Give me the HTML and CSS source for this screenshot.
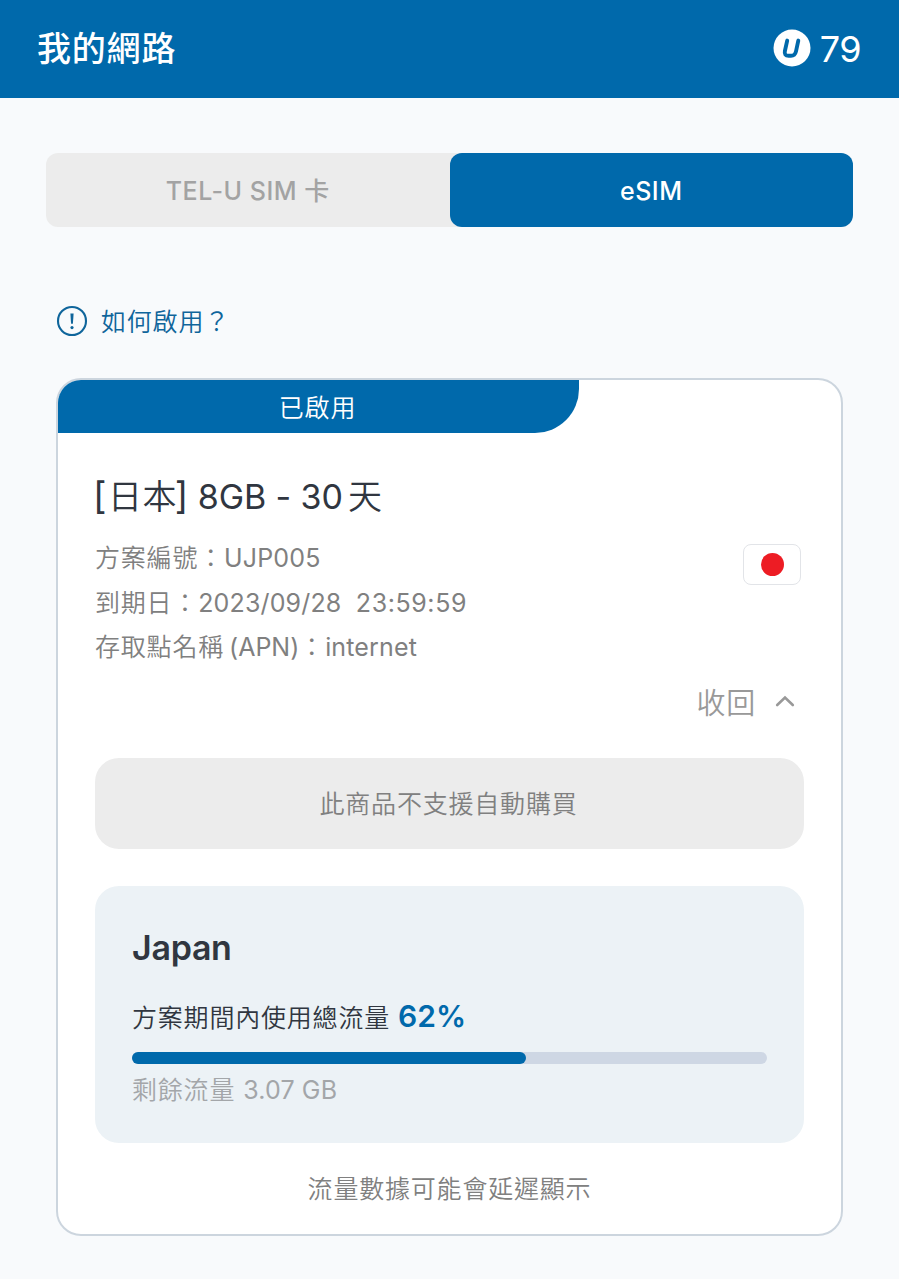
FILE: index.html
```
<!DOCTYPE html>
<html lang="zh-Hant">
  <head>
    <meta charset="utf-8" />
    <title>我的網路</title>
    <meta name="viewport" content="width=device-width, initial-scale=1" />
    <link rel="stylesheet" href="styles.css">
  </head>
  <body>
    <header class="header">
      <h1>我的網路</h1>
      <div class="points">
        <svg class="points-icon" viewBox="0 0 38 38" aria-hidden="true">
          <circle cx="19" cy="19" r="18.5" fill="#fff" />
          <path
            d="M14.2 11.6 L11.9 22 Q10.9 26.8 15.6 26.8 H18 Q22 26.8 23 22.4 L25.3 11.6"
            fill="none"
            stroke="#0069ab"
            stroke-width="3.9"
            stroke-linecap="round"
            stroke-linejoin="round"
          />
        </svg>
        <span>79</span>
      </div>
    </header>

    <main class="content">
      <nav class="tabs">
        <button class="tab">TEL-U SIM 卡</button>
        <button class="tab tab-active">eSIM</button>
      </nav>

      <a class="help">
        <svg class="help-icon" viewBox="0 0 32 32" aria-hidden="true">
          <circle cx="16" cy="16" r="14" fill="none" stroke="currentColor" stroke-width="2.1" />
          <path d="M14.4 8.4 h3.2 l-.7 10.4 h-1.8 z" fill="currentColor" />
          <circle cx="16" cy="22.6" r="1.6" fill="currentColor" />
        </svg>
        <span>如何啟用？</span>
      </a>

      <section class="card">
        <div class="ribbon">已啟用</div>
        <div class="card-body">
          <h2 class="plan-title"><span class="bracket">[</span>日本<span class="bracket">]</span><span class="plan-size">8GB - 30</span>天</h2>
          <div class="plan">
            <div class="plan-info">
              <p>方案編號：<span class="latin">UJP005</span></p>
              <p>到期日：<span class="latin">2023/09/28&nbsp; </span><span class="latin time">23:59:59</span></p>
              <p>存取點名稱<span class="latin apn">(APN)</span>：<span class="latin">internet</span></p>
            </div>
            <div class="flag"><span class="flag-sun"></span></div>
          </div>

          <div class="collapse">
            <span>收回</span>
            <svg class="chevron" viewBox="0 0 20 12" aria-hidden="true">
              <path d="M2.2 10 L10 2.6 L17.8 10" fill="none" stroke="currentColor" stroke-width="2.6" stroke-linecap="round" />
            </svg>
          </div>

          <div class="notice">此商品不支援自動購買</div>

          <div class="usage">
            <h3>Japan</h3>
            <p class="usage-label">方案期間內使用總流量<span class="percent">62%</span></p>
            <div class="bar"><div class="bar-fill" style="width: 62%"></div></div>
            <p class="remaining">剩餘流量<span class="latin">3.07 GB</span></p>
          </div>

          <p class="footnote">流量數據可能會延遲顯示</p>
        </div>
      </section>
    </main>
  </body>
</html>
```
FILE: styles.css
```
* {
  box-sizing: border-box;
}
body {
  margin: 0;
  background: #f8fafc;
  color: #303640;
  font-family: Inter, 'Noto Sans CJK TC', sans-serif;
  font-size: 25px;
  font-weight: 350;
  letter-spacing: 0.8px;
}
h1,
h2,
h3,
p {
  margin: 0;
}
.header {
  display: flex;
  justify-content: space-between;
  align-items: center;
  height: 98px;
  padding: 0 38px 1px 37px;
  background: #0069ab;
  color: #fff;
}
.header h1 {
  font-size: 34px;
  font-weight: 500;
  line-height: 49px;
  letter-spacing: 0.8px;
}
.points {
  display: flex;
  align-items: center;
  gap: 9px;
  font-size: 36px;
  font-weight: 400;
  line-height: 42px;
  letter-spacing: -0.5px;
}
.points-icon {
  width: 38px;
  height: 38px;
  margin-top: -2px;
}
.content {
  padding: 55px 46px 0;
}
.tabs {
  display: flex;
  height: 74px;
  border-radius: 12px;
  background: #ececec;
}
.tab {
  flex: 1;
  padding: 2px 0 0;
  border: 0;
  border-radius: 12px;
  background: transparent;
  color: #a3a3a3;
  font: inherit;
  font-weight: 500;
  line-height: 36px;
  letter-spacing: 0.5px;
}
.tab-active {
  background: #0069ab;
  color: #fff;
}
.help {
  display: flex;
  align-items: center;
  gap: 13px;
  height: 36px;
  margin: 76px 0 39px 10px;
  color: #0f659b;
  line-height: 36px;
}
.help span {
  padding-top: 1px;
}
.help-icon {
  width: 32px;
  height: 32px;
}
.card {
  height: 858px;
  margin: 0 10px;
  border: 2px solid #ccd5de;
  border-radius: 25px;
  background: #fff;
  overflow: hidden;
}
.ribbon {
  width: 521px;
  height: 53px;
  padding-right: 2px;
  border-bottom-right-radius: 44px;
  background: #0069ab;
  color: #fff;
  line-height: 56px;
  text-align: center;
}
.card-body {
  padding: 0 37px;
}
.plan-title {
  height: 50px;
  margin-top: 39px;
  font-size: 34px;
  font-weight: 350;
  line-height: 50px;
  letter-spacing: 0.4px;
}
.bracket {
  margin-left: -2px;
  font-size: 37px;
  font-weight: 400;
  line-height: 40px;
  letter-spacing: 1.5px;
}
.bracket + .plan-size {
  margin-left: 8px;
}
.plan-size {
  margin-right: 5px;
  font-weight: 400;
  letter-spacing: -0.1px;
}
.plan {
  display: flex;
  justify-content: space-between;
  height: 134px;
  margin-top: 14px;
  color: #808080;
  line-height: 44.5px;
}
.latin {
  font-weight: 400;
  letter-spacing: 0.15px;
}
.time {
  letter-spacing: 0.6px;
}
.apn {
  margin-left: 5px;
  letter-spacing: 0;
}
.flag {
  display: flex;
  justify-content: center;
  align-items: center;
  width: 58px;
  height: 41px;
  margin: 8px 3px 0 0;
  border: 1px solid #e2e4e8;
  border-radius: 8px;
}
.flag-sun {
  width: 23px;
  height: 23px;
  border-radius: 50%;
  background: #ed1c24;
}
.collapse {
  display: flex;
  justify-content: flex-end;
  align-items: center;
  gap: 19px;
  height: 44px;
  margin: 9px 9px 0 0;
  color: #999;
  font-size: 29px;
}
.chevron {
  width: 20px;
  height: 12px;
}
.notice {
  height: 91px;
  margin-top: 35px;
  padding-right: 2px;
  border-radius: 24px;
  background: #ececec;
  color: #808080;
  line-height: 92px;
  text-align: center;
}
.usage {
  height: 257px;
  margin-top: 37px;
  padding: 37px 37px 0;
  border-radius: 24px;
  background: #ecf2f6;
}
.usage h3 {
  font-size: 34px;
  font-weight: 600;
  line-height: 50px;
  letter-spacing: -0.3px;
}
.usage-label {
  height: 40px;
  margin-top: 23px;
  line-height: 40px;
}
.percent {
  margin-left: 8px;
  color: #0069ab;
  font-size: 30px;
  font-weight: 600;
  letter-spacing: 0;
}
.bar {
  height: 12px;
  margin-top: 16px;
  border-radius: 6px;
  background: #ced7e4;
}
.bar-fill {
  height: 12px;
  border-radius: 6px;
  background: #0069ab;
}
.remaining {
  margin-top: 8px;
  color: #a3a6a9;
  line-height: 36px;
}
.remaining .latin {
  margin-left: 8px;
}
.footnote {
  margin-top: 26px;
  color: #808080;
  line-height: 40px;
  text-align: center;
}
```
